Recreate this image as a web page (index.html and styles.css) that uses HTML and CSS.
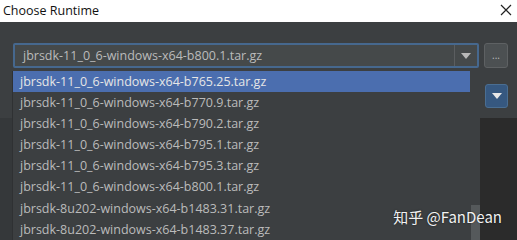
FILE: index.html
```html
<!DOCTYPE html>
<html>
<head>
<meta charset="utf-8">
<link rel="stylesheet" href="styles.css">
</head>
<body>
<div class="window">
  <div class="titlebar">
    <span class="title">Choose Runtime</span>
    <svg class="close" width="12" height="12" viewBox="0 0 12 12"><path d="M1 1L11 11M11 1L1 11" stroke="#222" stroke-width="1.2" fill="none"/></svg>
  </div>
  <div class="content">
    <div class="top">
      <div class="row1">
        <div class="combo">
          <span class="combo-text">jbrsdk-11_0_6-windows-x64-b800.1.tar.gz</span>
          <span class="combo-arrow"><svg width="10" height="6" viewBox="0 0 10 6"><path d="M0 0H10L5 6Z" fill="#b8b8b8"/></svg></span>
        </div>
        <div class="browse">...</div>
      </div>
      <div class="row2">
        <div class="blue-btn"><svg width="10" height="6" viewBox="0 0 10 6"><path d="M0 0H10L5 6Z" fill="#e8e8e8"/></svg></div>
      </div>
    </div>
    <div class="bottom">
      <div class="bottom-left"></div>
      <div class="bottom-right"></div>
    </div>
    <div class="popup">
      <div class="items">
        <div class="item selected">jbrsdk-11_0_6-windows-x64-b765.25.tar.gz</div>
        <div class="item">jbrsdk-11_0_6-windows-x64-b770.9.tar.gz</div>
        <div class="item">jbrsdk-11_0_6-windows-x64-b790.2.tar.gz</div>
        <div class="item">jbrsdk-11_0_6-windows-x64-b795.1.tar.gz</div>
        <div class="item">jbrsdk-11_0_6-windows-x64-b795.3.tar.gz</div>
        <div class="item">jbrsdk-11_0_6-windows-x64-b800.1.tar.gz</div>
        <div class="item">jbrsdk-8u202-windows-x64-b1483.31.tar.gz</div>
        <div class="item">jbrsdk-8u202-windows-x64-b1483.37.tar.gz</div>
      </div>
      <div class="scrollbar"><div class="thumb"></div></div>
    </div>
    <div class="watermark">知乎 @FanDean</div>
  </div>
</div>
</body>
</html>
```
FILE: styles.css
```css
html, body {
  margin: 0;
  padding: 0;
  width: 517px;
  height: 240px;
  overflow: hidden;
  background: #3c3f41;
}
.window {
  width: 517px;
  height: 240px;
  display: flex;
  flex-direction: column;
  font-family: "Open Sans", "Noto Sans", sans-serif;
}
.titlebar {
  height: 22px;
  background: #ffffff;
  display: flex;
  align-items: center;
  justify-content: space-between;
  padding: 0 5px 0 3px;
  flex: none;
}
.title {
  font-size: 12.5px;
  color: #111;
  margin-top: -1px;
}
.close {
  margin-top: -3px;
}
.content {
  position: relative;
  flex: 1;
  display: flex;
  flex-direction: column;
  background: #3c3f41;
  overflow: hidden;
}
.top {
  height: 96px;
  padding: 21px 9px 0 13px;
  box-sizing: border-box;
  display: flex;
  flex-direction: column;
}
.row1 {
  display: flex;
  gap: 5px;
  height: 25px;
}
.combo {
  width: 466px;
  box-sizing: border-box;
  border: 2px solid #46688e;
  border-radius: 2px;
  background: #45494a;
  display: flex;
  align-items: center;
}
.combo-text {
  flex: 1;
  padding-left: 8px;
  font-size: 12.5px;
  color: #bbbbbb;
}
.combo-arrow {
  width: 22px;
  height: 100%;
  border-left: 1px solid #5b5e60;
  display: flex;
  align-items: center;
  justify-content: center;
}
.browse {
  width: 24px;
  box-sizing: border-box;
  border: 1px solid #5e6163;
  border-radius: 3px;
  background: #4c5052;
  color: #bbbbbb;
  font-size: 10px;
  display: flex;
  align-items: center;
  justify-content: center;
  padding-bottom: 2px;
}
.row2 {
  display: flex;
  justify-content: flex-end;
  margin-top: 16px;
}
.blue-btn {
  width: 23px;
  height: 24px;
  box-sizing: border-box;
  background: #365880;
  border: 1px solid #4a6e92;
  border-radius: 3px;
  display: flex;
  align-items: center;
  justify-content: center;
}
.bottom {
  flex: 1;
  display: flex;
}
.bottom-left {
  flex: 1;
  background: #35383a;
}
.bottom-right {
  width: 37px;
  background: #2b2b2b;
}
.popup {
  position: absolute;
  left: 12px;
  top: 49px;
  width: 468px;
  height: 169px;
  overflow: hidden;
  background: #3c3f41;
  border-left: 1px solid #2f3133;
  box-sizing: border-box;
  display: flex;
}
.items {
  flex: 1;
  display: flex;
  flex-direction: column;
}
.item {
  flex: none;
  height: 21.1px;
  line-height: 21px;
  padding-left: 7px;
  font-size: 12.5px;
  color: #bbbbbb;
  white-space: nowrap;
}
.item.selected {
  background: #4b6eaf;
  color: #e6e6e6;
}
.scrollbar {
  width: 10px;
  position: relative;
}
.thumb {
  position: absolute;
  left: 1px;
  right: 0;
  top: 134px;
  height: 60px;
  background: #55595b;
}
.watermark {
  position: absolute;
  right: 15px;
  top: 184px;
  font-family: "Noto Sans CJK SC", "Noto Sans", sans-serif;
  font-size: 15px;
  color: #f2f2f2;
  text-shadow: 0 0 2px rgba(0,0,0,0.6);
  white-space: nowrap;
}
```
